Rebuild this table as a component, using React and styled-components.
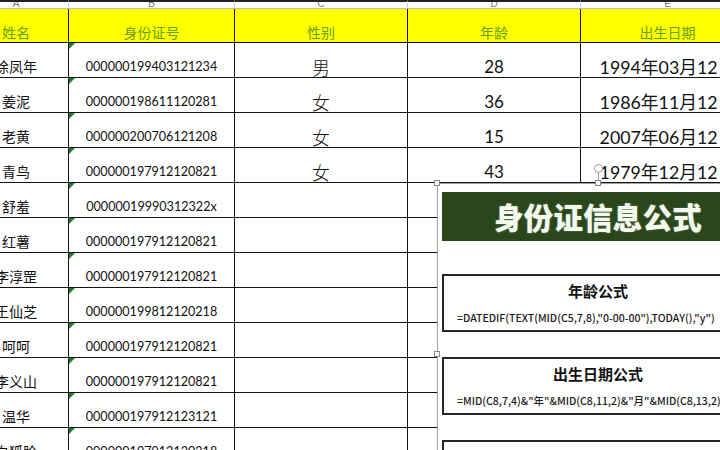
import React from "react";
import styled, { createGlobalStyle } from "styled-components";

const Global = createGlobalStyle`
  html, body { margin: 0; padding: 0; background: #fff; }
  body { width: 720px; height: 450px; overflow: hidden; font-family: "Noto Sans CJK SC", sans-serif; }
  * { box-sizing: border-box; }
`;

const Page = styled.div`
  position: relative;
  width: 720px;
  height: 450px;
  overflow: hidden;
  background: #fff;
`;

const Sheet = styled.div`
  display: grid;
  grid-template-columns: 105px 166px 173px 173px 174px;
  grid-template-rows: 9px 34px;
  grid-auto-rows: 35px;
  margin-left: -36px;
  width: max-content;
`;

const fonts = {
  letter: `font: 10px/10px "Liberation Sans", sans-serif; color: #777;`,
  head: `font: 14px/18px "Noto Sans CJK SC", sans-serif; color: #66a01c; padding-bottom: 1px;`,
  name: `font: 14px/18px "Noto Sans CJK SC", sans-serif; color: #111; padding-bottom: 2px;`,
  id: `font: 12.6px/16px Lato, "Noto Sans CJK SC", sans-serif; color: #111; padding-bottom: 2px;`,
  big: `font: 18px/20px "Noto Sans CJK SC", sans-serif; color: #111; font-weight: 300;`,
  num: `font: 17px/20px Lato, "Noto Sans CJK SC", sans-serif; color: #111;`,
  date: `font: 17.8px/20px Lato, "Noto Sans CJK SC", sans-serif; color: #111; white-space: nowrap;`,
};

const Cell = styled.div`
  position: relative;
  display: flex;
  align-items: flex-end;
  justify-content: center;
  overflow: hidden;
  white-space: nowrap;
  border-right: 1px solid ${(p) => (p.$kind === "letter" ? "#cfcfcf" : "#141414")};
  border-bottom: 1px solid ${(p) => (p.$kind === "letter" ? "#bdbdbd" : "#141414")};
  background: ${(p) => (p.$kind === "head" ? "#ffff00" : "#fff")};
  ${(p) => fonts[p.$kind]}
  ${(p) =>
    p.$kind === "letter" &&
    `align-items: flex-start; border-top: 2px solid #222; & > span { margin-top: -3px; }`}
  ${(p) =>
    p.$mark &&
    `&::before {
      content: "";
      position: absolute;
      left: 0;
      top: 0;
      border-top: 6px solid #217a2b;
      border-right: 6px solid transparent;
    }`}
`;

const Frame = styled.div`
  position: absolute;
  left: 437px;
  top: 183px;
  width: 322px;
  height: 342px;
  border: 1px solid #a3a3a3;
  background: #fff;
  padding: 8px 0 0 4px;
  display: flex;
  flex-direction: column;
  gap: 25px;
`;

const Handle = styled.div`
  position: absolute;
  width: 6px;
  height: 6px;
  background: #fff;
  border: 1px solid #8a8a8a;
  left: ${(p) => p.$x - 3}px;
  top: ${(p) => p.$y - 3}px;
`;

const Rotate = styled.div`
  position: absolute;
  left: 156px;
  top: -20px;
  width: 9px;
  height: 9px;
  border: 1.5px solid #9a9a9a;
  border-radius: 50%;
  background: #fff;
  &::after {
    content: "";
    position: absolute;
    left: 2.5px;
    top: 7px;
    width: 1px;
    height: 11px;
    background: #9a9a9a;
  }
`;

const TitleBar = styled.div`
  width: 312px;
  height: 49px;
  margin-bottom: 8px;
  background: #29471a;
  display: flex;
  align-items: center;
  justify-content: center;
  color: #f4f8ee;
  font: 900 29.5px/1 "Noto Sans CJK SC", sans-serif;
  letter-spacing: 0.2px;
  text-shadow: 0 0 2px rgba(255, 255, 255, 0.35);
`;

const Card = styled.div`
  width: 312px;
  height: 58px;
  flex: none;
  border: 2px solid #262626;
  padding-top: 4px;
  display: flex;
  flex-direction: column;
`;

const CardTitle = styled.div`
  font: 700 15px/22px "Noto Sans CJK SC", sans-serif;
  color: #111;
  text-align: center;
`;

const Formula = styled.div`
  margin-top: 8px;
  padding-left: 13px;
  font: 500 10.5px/16px "Noto Sans CJK SC", sans-serif;
  color: #1a1a1a;
  white-space: nowrap;
`;

const rows = [
  ["徐凤年", "000000199403121234", "男", "28", "1994年03月12日"],
  ["姜泥", "000000198611120281", "女", "36", "1986年11月12日"],
  ["老黄", "000000200706121208", "女", "15", "2007年06月12日"],
  ["青鸟", "000000197912120821", "女", "43", "1979年12月12日"],
  ["舒羞", "00000019990312322x", "", "", ""],
  ["红薯", "000000197912120821", "", "", ""],
  ["李淳罡", "000000197912120821", "", "", ""],
  ["王仙芝", "000000199812120218", "", "", ""],
  ["呵呵", "000000197912120821", "", "", ""],
  ["李义山", "000000197912120821", "", "", ""],
  ["温华", "000000197912123121", "", "", ""],
  ["白狐脸", "000000197912120218", "", "", ""],
];

export default function App() {
  return (
    <Page>
      <Global />
      <Sheet>
        {["A", "B", "C", "D", "E"].map((l) => (
          <Cell key={l} $kind="letter">
            <span>{l}</span>
          </Cell>
        ))}
        {["姓名", "身份证号", "性别", "年龄", "出生日期"].map((h) => (
          <Cell key={h} $kind="head">
            {h}
          </Cell>
        ))}
        {rows.map((r, i) => (
          <React.Fragment key={i}>
            <Cell $kind="name">{r[0]}</Cell>
            <Cell $kind="id" $mark>
              {r[1]}
            </Cell>
            <Cell $kind="big">{r[2]}</Cell>
            <Cell $kind="num">{r[3]}</Cell>
            <Cell $kind="date">{r[4]}</Cell>
          </React.Fragment>
        ))}
      </Sheet>

      <Frame>
        <Rotate />
        <Handle $x={-1} $y={-1} />
        <Handle $x={160} $y={-1} />
        <Handle $x={-1} $y={170} />
        <TitleBar>身份证信息公式</TitleBar>
        <Card>
          <CardTitle>年龄公式</CardTitle>
          <Formula>=DATEDIF(TEXT(MID(C5,7,8),"0-00-00"),TODAY(),"y")</Formula>
        </Card>
        <Card>
          <CardTitle>出生日期公式</CardTitle>
          <Formula>=MID(C8,7,4)&amp;"年"&amp;MID(C8,11,2)&amp;"月"&amp;MID(C8,13,2)&amp;"日"</Formula>
        </Card>
        <Card>
          <CardTitle>性别公式</CardTitle>
          <Formula>=IF(MOD(MID(C5,17,1),2)=1,"男","女")</Formula>
        </Card>
      </Frame>
    </Page>
  );
}
